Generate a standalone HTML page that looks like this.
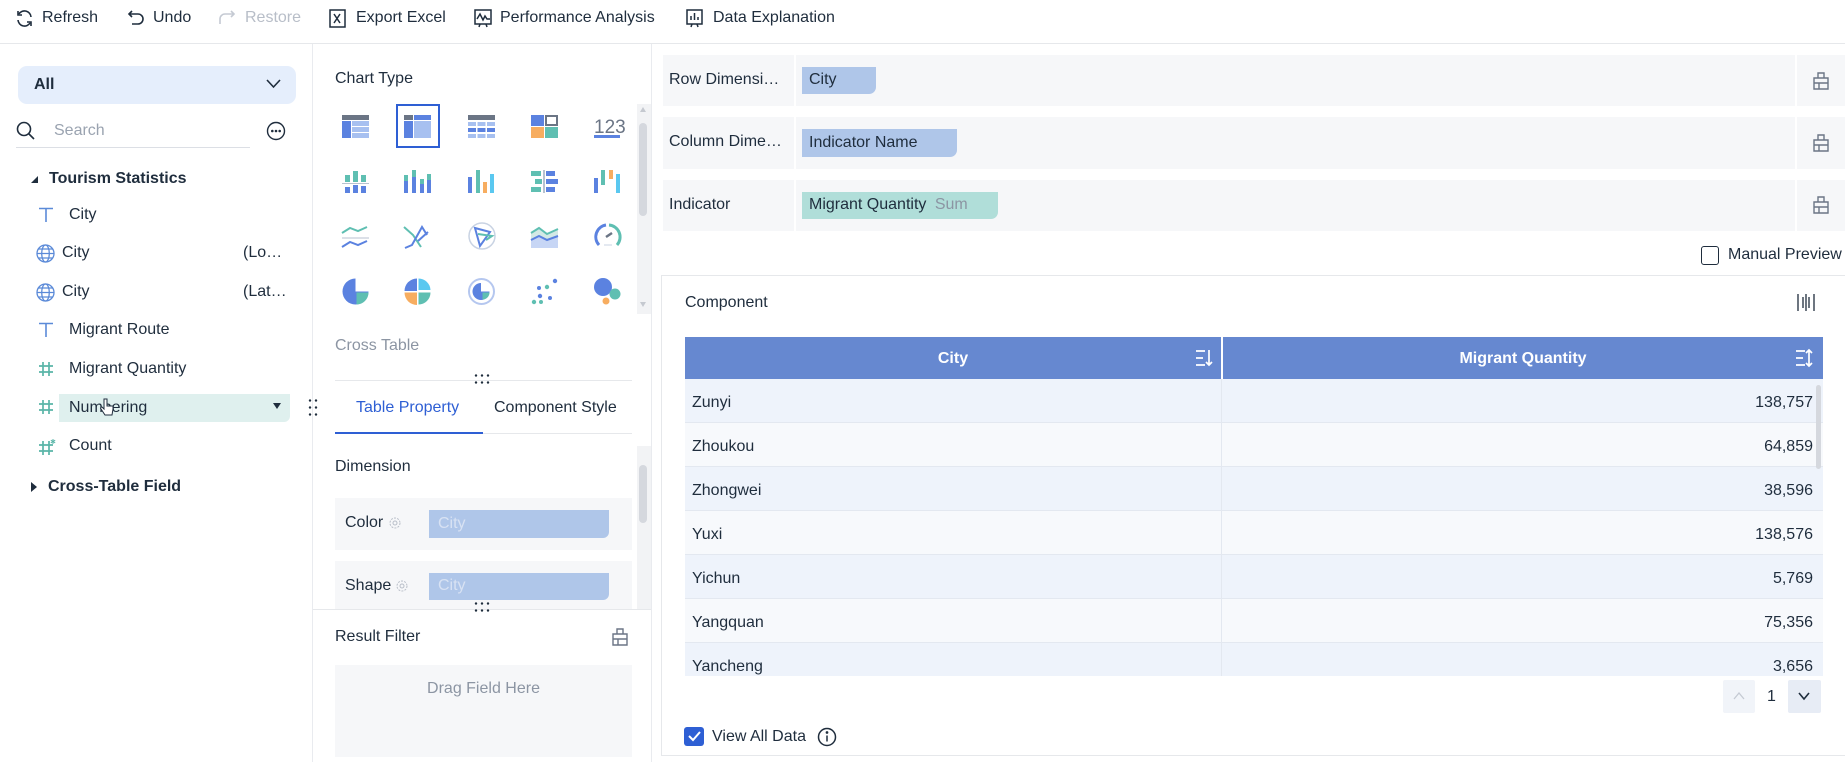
<!DOCTYPE html>
<html><head><meta charset="utf-8"><style>
*{box-sizing:border-box;margin:0;padding:0}
body{width:1845px;height:762px;overflow:hidden;background:#fff;font-family:"Liberation Sans",sans-serif;font-size:16px;color:#1f2d3d;position:relative}
.a{position:absolute;white-space:nowrap}
.t{line-height:20px}
svg{position:absolute;overflow:visible}
</style></head><body>
<!-- toolbar -->
<div class="a" style="left:0;top:43px;width:1845px;height:1px;background:#e6e8eb"></div>
<svg style="left:15px;top:9px" width="19" height="19" viewBox="0 0 19 19" fill="none" stroke="#1f2d3d" stroke-width="1.6"><path d="M16 8A6.5 6.5 0 0 0 4 5M3 11a6.5 6.5 0 0 0 12 3"/><path d="M3 2v4h4M16 17v-4h-4"/></svg>
<div class="a t" style="left:42px;top:8px">Refresh</div>
<svg style="left:127px;top:9px" width="18" height="18" viewBox="0 0 18 18" fill="none" stroke="#1f2d3d" stroke-width="1.6"><path d="M5 2 2 5l3 3"/><path d="M2 5h9a5 5 0 0 1 0 10H5"/></svg>
<div class="a t" style="left:153px;top:8px">Undo</div>
<svg style="left:218px;top:9px" width="18" height="18" viewBox="0 0 18 18" fill="none" stroke="#c5cad3" stroke-width="1.6"><path d="M13 2l3 3-3 3"/><path d="M16 5H7a5 5 0 0 0-5 5v5"/></svg>
<div class="a t" style="left:245px;top:8px;color:#b8bec8">Restore</div>
<svg style="left:329px;top:9px" width="17" height="19" viewBox="0 0 17 19" fill="none" stroke="#1f2d3d" stroke-width="1.5"><rect x="1" y="1" width="15" height="17"/><path d="M5 5l6 9M11 5l-6 9"/></svg>
<div class="a t" style="left:356px;top:8px">Export Excel</div>
<svg style="left:474px;top:9px" width="18" height="19" viewBox="0 0 18 19" fill="none" stroke="#1f2d3d" stroke-width="1.5"><rect x="1" y="1" width="16" height="14"/><path d="M3 10l3-5 3 6 2-4 2 3h3M6 15l-1 3M12 15l1 3"/></svg>
<div class="a t" style="left:500px;top:8px">Performance Analysis</div>
<svg style="left:686px;top:9px" width="17" height="19" viewBox="0 0 17 19" fill="none" stroke="#1f2d3d" stroke-width="1.5"><rect x="1" y="1" width="15" height="14"/><path d="M5 11V7M8.5 11V4M12 11V8M6 15l-1 3M11 15l1 3"/></svg>
<div class="a t" style="left:713px;top:8px">Data Explanation</div>

<!-- left panel -->
<div class="a" style="left:312px;top:44px;width:1px;height:718px;background:#e9ebef"></div>
<div class="a" style="left:18px;top:66px;width:278px;height:38px;background:#e5eefc;border-radius:9px"></div>
<div class="a t" style="left:34px;top:75px;font-weight:bold">All</div>
<svg style="left:266px;top:79px" width="15" height="10" viewBox="0 0 15 10" fill="none" stroke="#1f2d3d" stroke-width="1.6"><path d="M1 1l6.5 7L14 1"/></svg>
<svg style="left:16px;top:121px" width="19" height="19" viewBox="0 0 19 19" fill="none" stroke="#1f2d3d" stroke-width="1.6"><circle cx="8" cy="8" r="6.5"/><path d="M13 13l5 5"/></svg>
<div class="a t" style="left:54px;top:121px;color:#9aa3b0">Search</div>
<div class="a" style="left:16px;top:147px;width:234px;height:1px;background:#dcdfe5"></div>
<svg style="left:266px;top:121px" width="20" height="20" viewBox="0 0 20 20" fill="none" stroke="#1f2d3d" stroke-width="1.4"><circle cx="10" cy="10" r="8.5"/><circle cx="6.3" cy="10" r=".6" fill="#1f2d3d"/><circle cx="10" cy="10" r=".6" fill="#1f2d3d"/><circle cx="13.7" cy="10" r=".6" fill="#1f2d3d"/></svg>
<svg style="left:31px;top:175px" width="8" height="8" viewBox="0 0 8 8"><path d="M0 8L7 1V8Z" fill="#1f2d3d"/></svg>
<div class="a t" style="left:49px;top:169px;font-weight:bold">Tourism Statistics</div>
<svg style="left:38px;top:207px" width="16" height="16" viewBox="0 0 16 16" fill="none" stroke="#5b8ad8" stroke-width="1.6"><path d="M1 1.5h14M8 1.5V15"/></svg>
<div class="a t" style="left:69px;top:205px">City</div>
<svg style="left:36px;top:244px" width="19" height="19" viewBox="0 0 19 19" fill="none" stroke="#5b8ad8" stroke-width="1.3"><circle cx="9.5" cy="9.5" r="8.5"/><ellipse cx="9.5" cy="9.5" rx="3.8" ry="8.5"/><path d="M1 9.5h17M2.5 5h14M2.5 14h14"/></svg>
<div class="a t" style="left:62px;top:243px">City</div>
<div class="a t" style="left:243px;top:243px">(Lo…</div>
<svg style="left:36px;top:283px" width="19" height="19" viewBox="0 0 19 19" fill="none" stroke="#5b8ad8" stroke-width="1.3"><circle cx="9.5" cy="9.5" r="8.5"/><ellipse cx="9.5" cy="9.5" rx="3.8" ry="8.5"/><path d="M1 9.5h17M2.5 5h14M2.5 14h14"/></svg>
<div class="a t" style="left:62px;top:282px">City</div>
<div class="a t" style="left:243px;top:282px">(Lat…</div>
<svg style="left:38px;top:322px" width="16" height="16" viewBox="0 0 16 16" fill="none" stroke="#5b8ad8" stroke-width="1.6"><path d="M1 1.5h14M8 1.5V15"/></svg>
<div class="a t" style="left:69px;top:320px">Migrant Route</div>
<svg style="left:38px;top:361px" width="16" height="16" viewBox="0 0 16 16" fill="none" stroke="#5ab5a8" stroke-width="1.7"><path d="M5 1v14M11 1v14M1 5h14M1 11h14"/></svg>
<div class="a t" style="left:69px;top:359px">Migrant Quantity</div>
<div class="a" style="left:59px;top:394px;width:231px;height:28px;background:#dff0ee;border-radius:0 0 6px 0"></div>
<svg style="left:38px;top:399px" width="16" height="16" viewBox="0 0 16 16" fill="none" stroke="#5ab5a8" stroke-width="1.7"><path d="M5 1v14M11 1v14M1 5h14M1 11h14"/></svg>
<div class="a t" style="left:69px;top:398px">Numbering</div>
<svg style="left:100px;top:398px" width="14" height="20" viewBox="0 0 14 20"><path d="M4 1v10l-2-2c-1 0-2 1-1 2l4 6h7l1-6V8H7V1Z" fill="#fff" stroke="#1f2d3d" stroke-width="1"/></svg>
<svg style="left:273px;top:403px" width="8" height="6" viewBox="0 0 8 6"><path d="M0 0h8L4 6Z" fill="#1f2d3d"/></svg>
<div class="a" style="left:307px;top:397px;width:11px;height:20px;background:radial-gradient(circle,#1f2d3d 1px,transparent 1.4px) 0 0/6px 7px"></div>
<svg style="left:38px;top:438px" width="20" height="18" viewBox="0 0 20 18" fill="none" stroke="#5ab5a8" stroke-width="1.7"><path d="M5 3v14M11 3v14M1 7h14M1 13h14"/><path d="M15 1v5M12.8 2.2l4.4 2.6M17.2 2.2l-4.4 2.6" stroke-width="1"/></svg>
<div class="a t" style="left:69px;top:436px">Count</div>
<svg style="left:31px;top:482px" width="7" height="10" viewBox="0 0 7 10"><path d="M0 0l6 5-6 5Z" fill="#1f2d3d"/></svg>
<div class="a t" style="left:48px;top:477px;font-weight:bold">Cross-Table Field</div>

<!-- middle -->
<div class="a" style="left:651px;top:44px;width:1px;height:718px;background:#e9ebef"></div>
<div class="a t" style="left:335px;top:69px">Chart Type</div>
<div class="a" style="left:396px;top:104px;width:44px;height:44px;border:2px solid #2e5fd4"></div>
<svg style="left:0;top:0" width="651" height="320">
<!-- row1 -->
<g transform="translate(342,115)"><rect width="27" height="5" fill="#6b7585"/><rect y="6" width="9" height="17" fill="#5b82e0"/><rect x="10" y="6" width="17" height="5" fill="#a7c0f0"/><rect x="10" y="12" width="17" height="5" fill="#a7c0f0"/><rect x="10" y="18" width="17" height="5" fill="#a7c0f0"/></g>
<g transform="translate(404,115)"><rect width="9" height="5" fill="#6b7585"/><rect x="10" width="17" height="5" fill="#5b82e0"/><rect y="6" width="9" height="17" fill="#5b82e0"/><rect x="10" y="6" width="17" height="17" fill="#a7c0f0"/></g>
<g transform="translate(468,115)"><rect width="27" height="5" fill="#6b7585"/><g fill="#a7c0f0"><rect y="7" width="8" height="4"/><rect x="9.5" y="7" width="8" height="4"/><rect x="19" y="7" width="8" height="4"/></g><g fill="#5b82e0"><rect y="13" width="8" height="4"/><rect x="9.5" y="13" width="8" height="4"/><rect x="19" y="13" width="8" height="4"/></g><g fill="#a7c0f0"><rect y="19" width="8" height="4"/><rect x="9.5" y="19" width="8" height="4"/><rect x="19" y="19" width="8" height="4"/></g></g>
<g transform="translate(531,115)"><rect width="13" height="11" fill="#5b82e0"/><rect x="15" y="1" width="11" height="9" fill="none" stroke="#6b7585" stroke-width="2"/><rect y="12" width="13" height="11" fill="#f7ad60"/><rect x="14" y="12" width="13" height="11" fill="#5fbfb2"/></g>
<text x="594" y="133" font-family="Liberation Sans" font-size="19" fill="#6b7585">123</text><rect x="594" y="135" width="26" height="3" fill="#5b82e0"/>
<!-- row2 -->
<g transform="translate(342,170)"><rect x="3" y="5" width="5" height="7" fill="#5fbfb2"/><rect x="11" y="1" width="5" height="11" fill="#5fbfb2"/><rect x="19" y="5" width="5" height="7" fill="#5fbfb2"/><rect y="13" width="27" height="1" fill="#b8c2d0"/><rect x="3" y="17" width="5" height="6" fill="#5b82e0"/><rect x="11" y="15" width="5" height="8" fill="#5b82e0"/><rect x="19" y="16" width="5" height="7" fill="#5b82e0"/></g>
<g transform="translate(404,170)"><rect y="5" width="4" height="6" fill="#5fbfb2"/><rect y="11" width="4" height="12" fill="#5b82e0"/><rect x="8" width="4" height="7" fill="#5fbfb2"/><rect x="8" y="7" width="4" height="16" fill="#5b82e0"/><rect x="16" y="9" width="4" height="5" fill="#5fbfb2"/><rect x="16" y="14" width="4" height="9" fill="#5b82e0"/><rect x="23" y="4" width="4" height="6" fill="#5fbfb2"/><rect x="23" y="10" width="4" height="13" fill="#5b82e0"/></g>
<g transform="translate(468,170)"><rect y="7" width="4" height="16" fill="#5b82e0"/><rect x="8" width="4" height="23" fill="#5fbfb2"/><rect x="15" y="12" width="4" height="11" fill="#f7ad60"/><rect x="22" y="4" width="4" height="19" fill="#5ac8f0"/></g>
<g transform="translate(531,170)"><rect y="1" width="10" height="5" fill="#5fbfb2"/><rect x="12" y="1" width="0" height="0"/><rect x="12" y="0" width="2" height="23" fill="#b8c2d0"/><rect x="15" y="1" width="9" height="5" fill="#5b82e0"/><rect x="4" y="9" width="7" height="5" fill="#5fbfb2"/><rect x="15" y="9" width="12" height="5" fill="#5b82e0"/><rect y="17" width="10" height="5" fill="#5fbfb2"/><rect x="15" y="17" width="9" height="5" fill="#5b82e0"/></g>
<g transform="translate(594,170)"><rect y="8" width="4" height="15" fill="#5b82e0"/><rect x="7" y="0" width="4" height="15" fill="#5fbfb2"/><rect x="15" y="0" width="4" height="9" fill="#f7ad60"/><rect x="22" y="4" width="4" height="19" fill="#5ac8f0"/></g>
<!-- row3 -->
<g transform="translate(342,225)" fill="none" stroke-width="2"><path d="M0 8l8-5 8 3 9-4" stroke="#5fbfb2"/><path d="M0 13h27" stroke="#b8c2d0" stroke-width="1"/><path d="M0 22l8-5 8 3 9-4" stroke="#5b82e0"/></g>
<g transform="translate(404,225)" fill="none" stroke-width="2"><path d="M0 2l9 8 8 12" stroke="#5fbfb2"/><path d="M1 23l7-3 10-18 5 8" stroke="#5b82e0"/><path d="M24 7l-10 9" stroke="#5b82e0"/></g>
<g transform="translate(468,222)" fill="none"><circle cx="14" cy="14" r="13" stroke="#c9d3e3" stroke-width="1.5"/><path d="M7 6l15 4-10 14Z" stroke="#5b82e0" stroke-width="2"/><path d="M10 12l14 2-6 4" stroke="#5fbfb2" stroke-width="2"/></g>
<g transform="translate(531,225)"><path d="M0 8l8-5 8 6 11-5V23H0Z" fill="#d3e9e5"/><path d="M0 8l8-5 8 6 11-5" fill="none" stroke="#5fbfb2" stroke-width="2"/><path d="M0 15l8-4 8 4 11-4V23H0Z" fill="#c7d6f5"/><path d="M0 15l8-4 8 4 11-4" fill="none" stroke="#5b82e0" stroke-width="2"/></g>
<g transform="translate(594,222)" fill="none" stroke-width="3"><path d="M5 23A12 12 0 0 1 12 3" stroke="#5b82e0"/><path d="M15 3A12 12 0 0 1 23 23" stroke="#5fbfb2"/><path d="M10 23h8" stroke="#c9d3e3" stroke-width="1"/><path d="M12 15l6-4" stroke="#6b7585" stroke-width="2.5"/></g>
<!-- row4 -->
<g transform="translate(342,278)"><path d="M13.5 13.5V0.5A13 13 0 1 0 26.5 13.5Z" fill="#5b82e0"/><path d="M14.5 14.5h12A12 12 0 0 1 14.5 26.5Z" fill="#5fbfb2"/></g>
<g transform="translate(404,278)"><path d="M13 13V0.5A12.5 12.5 0 0 0 0.5 13Z" fill="#5b82e0"/><path d="M14.5 12V0.5A12 12 0 0 1 26.5 12Z" fill="#5ac8f0"/><path d="M13 14.5H0.5A12.5 12.5 0 0 0 13 27Z" fill="#f7ad60"/><path d="M14.5 14.5h12A12 12 0 0 1 14.5 26.5Z" fill="#5fbfb2"/></g>
<g transform="translate(468,278)"><circle cx="13.5" cy="13.5" r="12.5" fill="none" stroke="#b5c7ef" stroke-width="2"/><path d="M13 13.5V5A8.5 8.5 0 1 0 21.5 13.5Z" fill="#5b82e0"/><path d="M14.5 14.5h7A7 7 0 0 1 14.5 21.5Z" fill="#5fbfb2"/></g>
<g transform="translate(531,278)" fill="#5fbfb2"><circle cx="3" cy="24" r="2.2"/><circle cx="9" cy="18" r="2.2" fill="#5b82e0"/><circle cx="10" cy="24" r="2"/><circle cx="16" cy="9" r="2.2"/><circle cx="19" cy="20" r="2" fill="#5b82e0"/><circle cx="24" cy="3" r="2.2" fill="#5b82e0"/><circle cx="8" cy="10" r="2" fill="#5b82e0"/></g>
<g transform="translate(594,278)"><circle cx="9" cy="9" r="9" fill="#5b82e0"/><circle cx="21" cy="16" r="5.5" fill="#5fbfb2"/><circle cx="12" cy="23" r="3.5" fill="#f7ad60"/></g>
<!-- scrollbar -->
<rect x="637" y="104" width="14" height="210" fill="#f2f3f5"/><rect x="639" y="123" width="8" height="93" rx="4" fill="#d5d8de"/>
<path d="M640 112l3-5 3 5Z" fill="#c5c9d0"/><path d="M640 302l3 5 3-5Z" fill="#c5c9d0"/>
</svg>
<div class="a t" style="left:335px;top:336px;color:#8c95a3">Cross Table</div>
<div class="a" style="left:473px;top:372px;width:18px;height:14px;background:radial-gradient(circle,#1f2d3d 1px,transparent 1.4px) 0 0/6px 7px"></div>
<div class="a" style="left:335px;top:380px;width:297px;height:1px;background:#e6e8eb"></div>
<div class="a t" style="left:356px;top:398px;color:#2e5fd4">Table Property</div>
<div class="a t" style="left:494px;top:398px">Component Style</div>
<div class="a" style="left:335px;top:433px;width:297px;height:1px;background:#e6e8eb"></div>
<div class="a" style="left:335px;top:432px;width:148px;height:2px;background:#2e5fd4"></div>
<div class="a" style="left:637px;top:446px;width:14px;height:163px;background:#f2f3f5"></div>
<div class="a" style="left:639px;top:465px;width:8px;height:58px;border-radius:4px;background:#d5d8de"></div>
<div class="a t" style="left:335px;top:457px">Dimension</div>
<div class="a" style="left:335px;top:498px;width:297px;height:52px;background:#f6f7f9"></div>
<div class="a t" style="left:345px;top:513px">Color</div>
<svg style="left:389px;top:517px" width="12" height="12" viewBox="0 0 12 12" fill="none" stroke="#b8bec8"><circle cx="6" cy="6" r="2"/><circle cx="6" cy="6" r="5" stroke-dasharray="2 1.2"/></svg>
<div class="a" style="left:429px;top:510px;width:180px;height:28px;background:#afc6e9;border-radius:0 0 6px 0"></div>
<div class="a t" style="left:438px;top:514px;color:#d8e2f3">City</div>
<div class="a" style="left:335px;top:561px;width:297px;height:48px;background:#f6f7f9"></div>
<div class="a t" style="left:345px;top:576px">Shape</div>
<svg style="left:396px;top:580px" width="12" height="12" viewBox="0 0 12 12" fill="none" stroke="#b8bec8"><circle cx="6" cy="6" r="2"/><circle cx="6" cy="6" r="5" stroke-dasharray="2 1.2"/></svg>
<div class="a" style="left:429px;top:573px;width:180px;height:27px;background:#afc6e9;border-radius:0 0 6px 0"></div>
<div class="a t" style="left:438px;top:576px;color:#d8e2f3">City</div>
<div class="a" style="left:313px;top:609px;width:338px;height:1px;background:#e6e8eb"></div>
<div class="a" style="left:473px;top:600px;width:18px;height:14px;background:radial-gradient(circle,#1f2d3d 1px,transparent 1.4px) 0 0/6px 7px"></div>
<div class="a t" style="left:335px;top:627px">Result Filter</div>
<svg style="left:612px;top:628px" width="16" height="18" viewBox="0 0 16 18" fill="none" stroke="#6b7585" stroke-width="1.4"><path d="M5 6V1h6v5M1 6h14v11H1ZM1 11h14M6 11v6"/></svg>
<div class="a" style="left:335px;top:665px;width:297px;height:92px;background:#f6f7f9"></div>
<div class="a t" style="left:335px;top:679px;width:297px;text-align:center;color:#8c95a3">Drag Field Here</div>

<!-- right -->
<div class="a" style="left:663px;top:55px;width:1182px;height:51px;background:#f6f7f9"></div>
<div class="a" style="left:663px;top:117px;width:1182px;height:52px;background:#f6f7f9"></div>
<div class="a" style="left:663px;top:180px;width:1182px;height:51px;background:#f6f7f9"></div>
<div class="a" style="left:794px;top:55px;width:2px;height:176px;background:#fff"></div>
<div class="a" style="left:1795px;top:55px;width:2px;height:176px;background:#fff"></div>
<div class="a" style="left:663px;top:106px;width:1182px;height:11px;background:#fff"></div>
<div class="a" style="left:663px;top:169px;width:1182px;height:11px;background:#fff"></div>
<div class="a t" style="left:669px;top:70px">Row Dimensi…</div>
<div class="a t" style="left:669px;top:132px">Column Dime…</div>
<div class="a t" style="left:669px;top:195px">Indicator</div>
<div class="a" style="left:802px;top:67px;width:74px;height:27px;background:#afc6e9;border-radius:0 0 7px 0"></div>
<div class="a t" style="left:809px;top:70px">City</div>
<div class="a" style="left:802px;top:129px;width:155px;height:28px;background:#afc6e9;border-radius:0 0 7px 0"></div>
<div class="a t" style="left:809px;top:133px">Indicator Name</div>
<div class="a" style="left:802px;top:192px;width:196px;height:27px;background:#b0ded9;border-radius:0 0 7px 0"></div>
<div class="a t" style="left:809px;top:195px">Migrant Quantity <span style="color:#8c95a3;margin-left:4px">Sum</span></div>
<svg style="left:1813px;top:72px" width="16" height="18" viewBox="0 0 16 18" fill="none" stroke="#6b7585" stroke-width="1.4"><path d="M5 6V1h6v5M1 6h14v11H1ZM1 11h14M6 11v6"/></svg>
<svg style="left:1813px;top:134px" width="16" height="18" viewBox="0 0 16 18" fill="none" stroke="#6b7585" stroke-width="1.4"><path d="M5 6V1h6v5M1 6h14v11H1ZM1 11h14M6 11v6"/></svg>
<svg style="left:1813px;top:196px" width="16" height="18" viewBox="0 0 16 18" fill="none" stroke="#6b7585" stroke-width="1.4"><path d="M5 6V1h6v5M1 6h14v11H1ZM1 11h14M6 11v6"/></svg>
<div class="a" style="left:1701px;top:246px;width:18px;height:19px;border:1.5px solid #1f2d3d;border-radius:3px"></div>
<div class="a t" style="left:1728px;top:245px">Manual Preview</div>

<div class="a" style="left:661px;top:275px;width:1190px;height:481px;border:1px solid #e6e8eb"></div>
<div class="a t" style="left:685px;top:293px">Component</div>
<svg style="left:1797px;top:294px" width="18" height="17" viewBox="0 0 18 17" stroke="#1f2d3d" stroke-width="1.6"><path d="M1 0v17M17 0v17M6 3v11M12 3v11M9 0v17" stroke-width="1.3"/></svg>
<div class="a" style="left:685px;top:337px;width:1138px;height:42px;background:#6688d0"></div>
<div class="a" style="left:1221px;top:337px;width:2px;height:42px;background:#fff"></div>
<div class="a t" style="left:685px;top:349px;width:536px;text-align:center;color:#fff;font-weight:bold">City</div>
<div class="a t" style="left:1223px;top:349px;width:600px;text-align:center;color:#fff;font-weight:bold">Migrant Quantity</div>
<svg style="left:1195px;top:349px" width="18" height="18" viewBox="0 0 18 18" stroke="#fff" stroke-width="1.7" fill="none"><path d="M1 2h9M1 9h7M1 16h9M14 1v15M11 13l3 3 3-3"/></svg>
<svg style="left:1795px;top:349px" width="18" height="18" viewBox="0 0 18 18" stroke="#fff" stroke-width="1.7" fill="none"><path d="M1 2h9M1 9h7M1 16h9M14 1v16M11 4l3-3 3 3M11 14l3 3 3-3"/></svg>
<div class="a" style="left:685px;top:379px;width:1138px;height:297px;overflow:hidden">
<div style="position:absolute;left:0;top:0;width:1138px">
<div style="height:44px;background:#eef3fb;border-bottom:1px solid #e3e8f0"></div>
<div style="height:44px;background:#f7f9fc;border-bottom:1px solid #e3e8f0"></div>
<div style="height:44px;background:#eef3fb;border-bottom:1px solid #e3e8f0"></div>
<div style="height:44px;background:#f7f9fc;border-bottom:1px solid #e3e8f0"></div>
<div style="height:44px;background:#eef3fb;border-bottom:1px solid #e3e8f0"></div>
<div style="height:44px;background:#f7f9fc;border-bottom:1px solid #e3e8f0"></div>
<div style="height:44px;background:#eef3fb"></div>
</div>
<div style="position:absolute;left:536px;top:0;width:1px;height:300px;background:#e3e8f0"></div>
<div style="position:absolute;left:1131px;top:6px;width:5px;height:84px;border-radius:3px;background:#d5d8de"></div>
</div>
<div class="a t" style="left:692px;top:393px">Zunyi</div><div class="a t" style="left:1600px;width:213px;text-align:right;top:393px">138,757</div>
<div class="a t" style="left:692px;top:437px">Zhoukou</div><div class="a t" style="left:1600px;width:213px;text-align:right;top:437px">64,859</div>
<div class="a t" style="left:692px;top:481px">Zhongwei</div><div class="a t" style="left:1600px;width:213px;text-align:right;top:481px">38,596</div>
<div class="a t" style="left:692px;top:525px">Yuxi</div><div class="a t" style="left:1600px;width:213px;text-align:right;top:525px">138,576</div>
<div class="a t" style="left:692px;top:569px">Yichun</div><div class="a t" style="left:1600px;width:213px;text-align:right;top:569px">5,769</div>
<div class="a t" style="left:692px;top:613px">Yangquan</div><div class="a t" style="left:1600px;width:213px;text-align:right;top:613px">75,356</div>
<div class="a" style="left:685px;top:646px;width:1138px;height:30px;overflow:hidden"><div class="a t" style="left:7px;top:11px">Yancheng</div><div class="a t" style="left:915px;width:213px;text-align:right;top:11px">3,656</div></div>
<div class="a" style="left:1723px;top:680px;width:32px;height:33px;background:#f1f4f9;border-radius:2px"></div>
<svg style="left:1733px;top:692px" width="12" height="8" viewBox="0 0 12 8" fill="none" stroke="#c5cad3" stroke-width="1.3"><path d="M1 7l5-6 5 6"/></svg>
<div class="a t" style="left:1767px;top:687px">1</div>
<div class="a" style="left:1788px;top:680px;width:33px;height:33px;background:#e7ecf5;border-radius:2px"></div>
<svg style="left:1798px;top:692px" width="12" height="8" viewBox="0 0 12 8" fill="none" stroke="#1f2d3d" stroke-width="1.6"><path d="M1 1l5 6 5-6"/></svg>
<div class="a" style="left:684px;top:727px;width:20px;height:19px;background:#2e5fd4;border-radius:3px"></div>
<svg style="left:688px;top:731px" width="13" height="11" viewBox="0 0 13 11" fill="none" stroke="#fff" stroke-width="2"><path d="M1 5l4 4 7-8"/></svg>
<div class="a t" style="left:712px;top:727px">View All Data</div>
<svg style="left:817px;top:727px" width="20" height="20" viewBox="0 0 20 20" fill="none" stroke="#1f2d3d" stroke-width="1.5"><circle cx="10" cy="10" r="8.5"/><path d="M10 8.5v6"/><circle cx="10" cy="5.5" r=".6" fill="#1f2d3d"/></svg>
</body></html>
